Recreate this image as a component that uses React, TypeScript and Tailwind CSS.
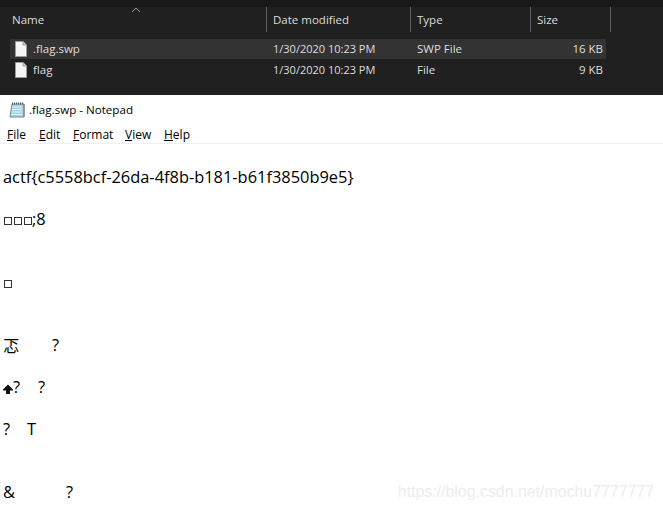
import type { ReactNode } from 'react'

const uiFont = "font-['Open_Sans','Noto_Sans',sans-serif]"

function FileIcon({ className }: { className?: string }) {
  return (
    <svg viewBox="0 0 12 16" className={className} width="12" height="16">
      <path d="M0.5 0.5H8L11.5 4V15.5H0.5Z" fill="#f4f6f6" stroke="#9a9a9a" strokeWidth="1" />
      <path d="M8 0.5V4H11.5" fill="#d8d8d8" stroke="#9a9a9a" strokeWidth="1" />
    </svg>
  )
}

function NotepadIcon() {
  return (
    <svg viewBox="0 0 16 16" width="16" height="16" className="shrink-0">
      <path d="M3 2H15V15H1Z" fill="#a9d4e6" stroke="#6d8c99" strokeWidth="1" />
      <path d="M3.5 5H13M3 7.5H13M2.6 10H13M2.2 12.5H13" stroke="#dff0f7" strokeWidth="1" />
      <path d="M3 1.5H15" stroke="#555" strokeWidth="2" strokeDasharray="1 1" />
      <path d="M15 2V15" stroke="#8a7a55" strokeWidth="1" />
    </svg>
  )
}

function Column({ label, width }: { label: string; width: string }) {
  return (
    <div className={`${width} h-[25px] border-r border-[#5c5c5c] pl-[6px] flex items-center text-[11.5px] text-[#dcdcdc]`}>
      {label}
    </div>
  )
}

function FileRow({ name, type, size, selected }: { name: string; type: string; size: string; selected?: boolean }) {
  return (
    <div className={`flex h-[20px] w-[596px] items-center text-[11.5px] text-[#dedede] ${selected ? 'bg-[#333333]' : ''}`}>
      <div className="flex w-[263px] items-center pl-[5px]">
        <FileIcon className="shrink-0" />
        <span className="ml-[6px]">{name}</span>
      </div>
      <div className="w-[144px] text-[11px]">1/30/2020 10:23 PM</div>
      <div className="w-[120px]">{type}</div>
      <div className="w-[66px] text-right">{size}</div>
    </div>
  )
}

function Menu({ hot, rest, width }: { hot: string; rest: string; width: string }) {
  return (
    <span className={width}>
      <span className="underline">{hot}</span>
      {rest}
    </span>
  )
}

function Line({ children }: { children?: ReactNode }) {
  return <div className="flex h-[21px] items-center whitespace-pre">{children}</div>
}

function Box() {
  return <span className="mt-[2px] h-[8px] w-[8px] border border-[#333333]" />
}

export default function App() {
  return (
    <div className={`relative h-[511px] w-[663px] overflow-hidden bg-white ${uiFont}`}>
      {/* Explorer */}
      <div className="h-[95px] bg-[#202020] border-t-[7px] border-[#191919]">
        <div className="relative flex pl-[6px]">
          <Column label="Name" width="w-[261px]" />
          <Column label="Date modified" width="w-[144px]" />
          <Column label="Type" width="w-[120px]" />
          <Column label="Size" width="w-[80px]" />
          <svg viewBox="0 0 10 6" width="10" height="6" className="absolute left-[131px] top-0">
            <path d="M1 5L5 1L9 5" fill="none" stroke="#9a9a9a" strokeWidth="1" />
          </svg>
        </div>
        <div className="mt-[7px] ml-[10px] flex flex-col gap-[1px]">
          <FileRow name=".flag.swp" type="SWP File" size="16 KB" selected />
          <FileRow name="flag" type="File" size="9 KB" />
        </div>
      </div>

      {/* Notepad */}
      <div className="flex h-[30px] items-center pl-[9px] text-[11.6px] text-black">
        <NotepadIcon />
        <span className="ml-[4px]">.flag.swp - Notepad</span>
      </div>
      <div className="flex h-[19px] items-center border-b border-[#f0f0f0] pl-[7px] pt-[1px] text-[12px] text-black">
        <Menu hot="F" rest="ile" width="w-[32px]" />
        <Menu hot="E" rest="dit" width="w-[34px]" />
        <Menu hot="F" rest="ormat" width="w-[52px]" />
        <Menu hot="V" rest="iew" width="w-[39px]" />
        <Menu hot="H" rest="elp" width="w-[40px]" />
      </div>
      <div className="pl-[3px] pt-[23px] text-[16.4px] text-black font-['Open_Sans','Noto_Sans_CJK_SC',sans-serif]">
        <Line>actf{'{'}c5558bcf-26da-4f8b-b181-b61f3850b9e5{'}'}</Line>
        <Line />
        <Line>
          <span className="ml-[1px] flex gap-[2px]">
            <Box />
            <Box />
            <Box />
          </span>
          ;8
        </Line>
        <Line />
        <Line />
        <Line>
          <span className="ml-[1px] flex">
            <Box />
          </span>
        </Line>
        <Line />
        <Line />
        <Line>
          <span className="w-[49px] font-['Noto_Sans_CJK_SC',sans-serif]">忑</span>?
        </Line>
        <Line />
        <Line>
          <svg viewBox="0 0 10 10" width="10" height="10" className="mt-[3px] shrink-0">
            <path d="M5 0.5L10 5.5V6.5H7V10H3V6.5H0V5.5Z" fill="#111" />
          </svg>
          <span className="w-[25px]">?</span>?
        </Line>
        <Line />
        <Line>
          <span className="w-[24px]">?</span>T
        </Line>
        <Line />
        <Line />
        <Line>
          <span className="w-[63px]">&amp;</span>?
        </Line>
      </div>

      {/* CSDN watermark */}
      <div className="absolute bottom-[7px] right-[9px] text-[15.9px] text-[#ededed] font-['Liberation_Sans',sans-serif]">
        https://blog.csdn.net/mochu7777777
      </div>
    </div>
  )
}
